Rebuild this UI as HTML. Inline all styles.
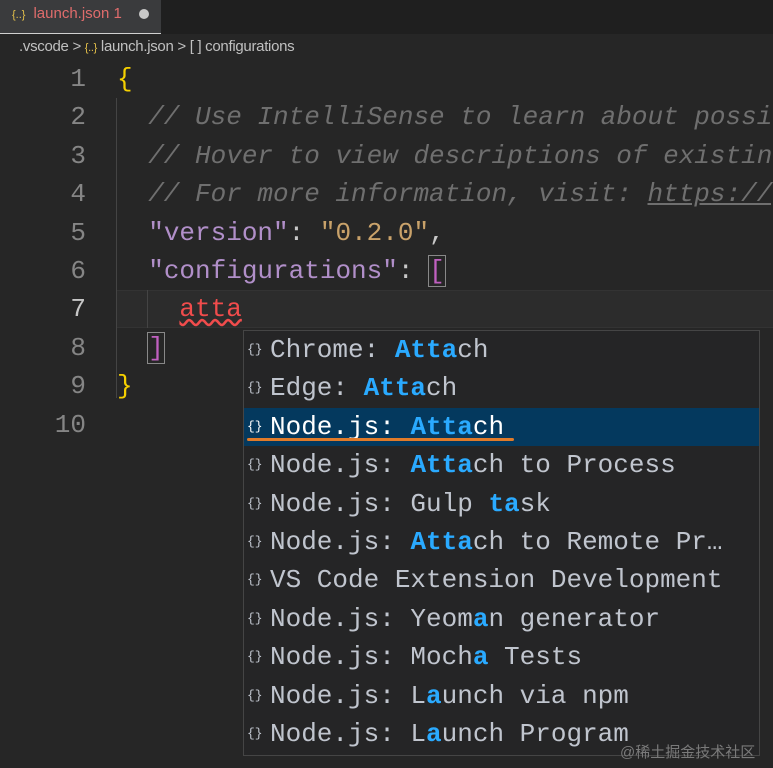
<!DOCTYPE html>
<html><head><style>
*{margin:0;padding:0;box-sizing:border-box}
html,body{width:773px;height:768px;overflow:hidden}
body{background:#262626;position:relative;font-family:"Liberation Mono",monospace;}
.tabbar{position:absolute;left:0;top:0;width:773px;height:34px;background:#1f1f1f}
.tab{position:absolute;left:0;top:0;width:161px;height:34px;background:#3a3b3d;border-bottom:1px solid #d0d0d0;font-family:"Liberation Sans",sans-serif;font-size:15px;color:#e06c6c;line-height:28px;padding-left:12px}
.tab .ic{color:#e5c14a;font-size:11px;margin-right:8px}
.tab .dot{position:absolute;left:139px;top:9px;width:10px;height:10px;border-radius:50%;background:#c8c8c8}
.bc{position:absolute;left:19px;top:38px;font-family:"Liberation Sans",sans-serif;font-size:15px;color:#c0c0c0;white-space:pre;letter-spacing:-0.3px}
.bc .ic{color:#e5c14a;font-size:11px}
.ln{position:absolute;left:0;width:86px;text-align:right;font-size:26px;color:#858585;height:38.4px;line-height:38.4px}
.cl{position:absolute;left:117px;width:656px;overflow:hidden;font-size:26px;height:38.4px;line-height:38.4px;white-space:pre;color:#c8c8c8}
.cm{color:#6f6f6f;font-style:italic}
.k{color:#b18fc9}.s{color:#c9a26a}.y{color:#f5d000}.p{color:#c060c0}
.cur{position:absolute;left:117px;top:290px;width:656px;height:38px;background:#2c2c2c;border-top:1px solid #333;border-bottom:1px solid #333}
.guide{position:absolute;width:1px;background:#444}
.sug{position:absolute;left:243px;top:330px;width:517px;height:426px;background:#252526;border:1px solid #454545;overflow:hidden}
.it{position:absolute;left:0;width:515px;height:38.4px;line-height:38.4px;font-size:26px;color:#c0c5ce;white-space:pre;padding-left:26px}
.it .b{color:#2aaaff;font-weight:bold}
.it .i{position:absolute;left:3px;top:0;font-size:13px;color:#c0c5ce}
.sel{background:#04395e;color:#fff}
</style></head><body>
<div class="tabbar"><div class="tab"><span class="ic">{..}</span>launch.json 1<span class="dot"></span></div></div>
<div class="bc">.vscode &gt; <span class="ic">{..}</span> launch.json &gt; [ ] configurations</div>
<div class="cur"></div>
<div class="guide" style="left:116px;top:98px;height:300px"></div>
<div class="guide" style="left:147px;top:290px;height:38px"></div>
<div class="ln" style="top:60px">1</div><div class="cl" style="top:60px"><span class="y">{</span></div>
<div class="ln" style="top:98.4px">2</div><div class="cl cm" style="top:98.4px">  // Use IntelliSense to learn about possible</div>
<div class="ln" style="top:136.8px">3</div><div class="cl cm" style="top:136.8px">  // Hover to view descriptions of existing</div>
<div class="ln" style="top:175.2px">4</div><div class="cl cm" style="top:175.2px">  // For more information, visit: <span style="text-decoration:underline">https://go</span></div>
<div class="ln" style="top:213.6px">5</div><div class="cl" style="top:213.6px">  <span class="k">"version"</span>: <span class="s">"0.2.0"</span>,</div>
<div class="ln" style="top:252px">6</div><div class="cl" style="top:252px">  <span class="k">"configurations"</span>: <span class="p" style="outline:1px solid #888">[</span></div>
<div class="ln" style="top:290.4px;color:#c6c6c6">7</div><div class="cl" style="top:290.4px">    <span style="color:#f14c4c;text-decoration:underline wavy #f14c4c">atta</span></div>
<div class="ln" style="top:328.8px">8</div><div class="cl" style="top:328.8px">  <span class="p" style="outline:1px solid #888">]</span></div>
<div class="ln" style="top:367.2px">9</div><div class="cl" style="top:367.2px"><span class="y">}</span></div>
<div class="ln" style="top:405.6px">10</div>
<div class="sug">
<div class="it" style="top:0"><span class="i">{}</span>Chrome: <span class="b">Atta</span>ch</div>
<div class="it" style="top:38.4px"><span class="i">{}</span>Edge: <span class="b">Atta</span>ch</div>
<div class="it sel" style="top:76.8px"><span class="i" style="color:#fff">{}</span>Node.js: <span class="b">Atta</span>ch<div style="position:absolute;left:3px;top:30px;width:267px;height:3px;background:#e07b2a;border-radius:2px"></div></div>
<div class="it" style="top:115.2px"><span class="i">{}</span>Node.js: <span class="b">Atta</span>ch to Process</div>
<div class="it" style="top:153.6px"><span class="i">{}</span>Node.js: Gulp <span class="b">ta</span>sk</div>
<div class="it" style="top:192px"><span class="i">{}</span>Node.js: <span class="b">Atta</span>ch to Remote Pr…</div>
<div class="it" style="top:230.4px"><span class="i">{}</span>VS Code Extension Development</div>
<div class="it" style="top:268.8px"><span class="i">{}</span>Node.js: Yeom<span class="b">a</span>n generator</div>
<div class="it" style="top:307.2px"><span class="i">{}</span>Node.js: Moch<span class="b">a</span> Tests</div>
<div class="it" style="top:345.6px"><span class="i">{}</span>Node.js: L<span class="b">a</span>unch via npm</div>
<div class="it" style="top:384px"><span class="i">{}</span>Node.js: L<span class="b">a</span>unch Program</div>
</div>
<div style="position:absolute;left:620px;top:741px;font-family:'Liberation Sans','Noto Sans CJK SC',sans-serif;font-size:15px;color:#7a7a7a">@稀土掘金技术社区</div>
</body></html>
